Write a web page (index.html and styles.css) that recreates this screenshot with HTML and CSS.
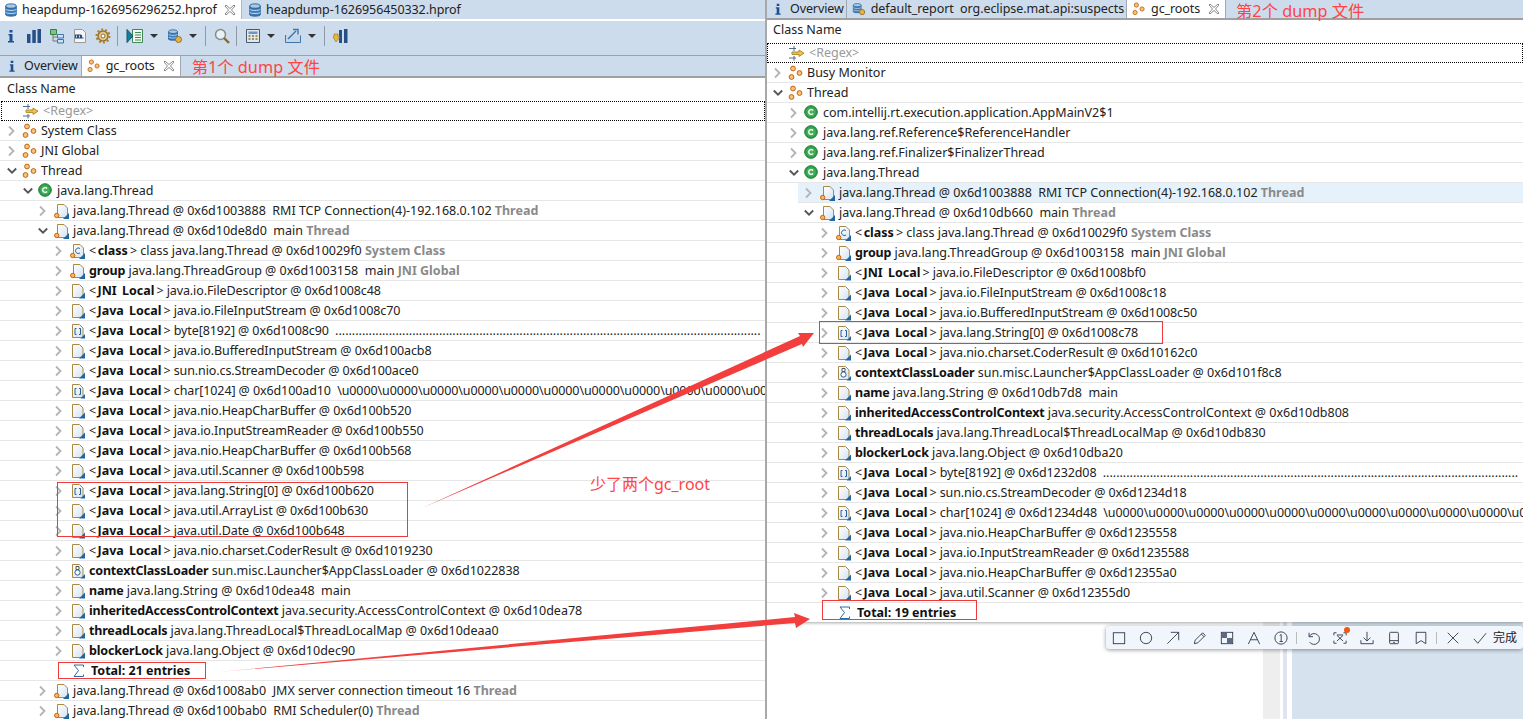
FILE: index.html
```html
<!DOCTYPE html>
<html lang="en">
<head>
<meta charset="utf-8">
<title>Memory Analyzer</title>
<link rel="stylesheet" href="styles.css">
</head>
<body>
<svg class="defs" width="0" height="0" aria-hidden="true">
  <defs>
    <linearGradient id="paper" x1="0" y1="0" x2="1" y2="1"><stop offset="0" stop-color="#fff"/><stop offset="1" stop-color="#d5e3f2"/></linearGradient>
    <symbol id="cr" viewBox="0 0 10 16"><path d="M2 3.500 6.500 8 2 12.500" fill="none" stroke="#b4b4b4" stroke-width="1.800"/></symbol>
    <symbol id="cd" viewBox="0 0 10 16"><path d="M.8 5.500 5 9.700 9.200 5.500" fill="none" stroke="#555" stroke-width="1.800"/></symbol>
    <symbol id="grp" viewBox="0 0 16 16"><g fill="#f6c27c" stroke="#c2650f"><circle cx="5" cy="3.500" r="2.400"/><circle cx="11.500" cy="8" r="2.400"/><circle cx="3.500" cy="12" r="2.400"/></g></symbol>
    <symbol id="cls" viewBox="0 0 16 16"><circle cx="7" cy="7" r="6.300" fill="#2f9d46" stroke="#1d7f35"/><circle cx="7" cy="7" r="4.500" fill="#43b15a"/><path d="M9 5.500a2.400 2.400 0 1 0 0 3" fill="none" stroke="#fff" stroke-width="1.400"/></symbol>
    <symbol id="doc" viewBox="0 0 16 16"><path d="M2.500 1.500h7l3.500 3.500v9.500h-10.500z" fill="url(#paper)" stroke="#a98a45"/><path d="M15 9.500v6h-6z" fill="#22659f"/></symbol>
    <symbol id="obj" viewBox="1 0 16 16"><path d="M4.500 1.500h6.500l3.500 3.500v9.500h-10z" fill="url(#paper)" stroke="#a98a45"/><path d="M16 10v6h-6z" fill="#22659f"/><circle cx="3.700" cy="12.500" r="2.200" fill="#f6b565" stroke="#c2650f"/></symbol>
    <symbol id="kls" viewBox="1 0 16 16"><path d="M4.500 1.500h6.500l3.500 3.500v9.500h-10z" fill="url(#paper)" stroke="#a98a45"/><path d="M16 10v6h-6z" fill="#22659f"/><path d="M11 5.500a2.800 2.800 0 1 0 0 4.500" fill="none" stroke="#2a6aa5"/><circle cx="3.700" cy="12.500" r="2.200" fill="#f6b565" stroke="#c2650f"/></symbol>
    <symbol id="arr" viewBox="0 0 16 16"><path d="M2.500 1.500h7l3.500 3.500v9.500h-10.500z" fill="url(#paper)" stroke="#a98a45"/><path d="M6.500 5.500h-1.500v6h1.500M9 5.500h1.500v6h-1.500" fill="none" stroke="#2a5f95"/><path d="M15 11v4.500h-4.500z" fill="#22659f"/></symbol>
    <symbol id="ldr" viewBox="0 0 16 16"><path d="M2.500 1.500h7l3.500 3.500v9.500h-10.500z" fill="url(#paper)" stroke="#a98a45"/><circle cx="7.500" cy="9.500" r="2.600" fill="#fff" stroke="#2a5f95"/><path d="M6 3.500h3v3h-3z" fill="#fff" stroke="#555"/><path d="M15 11v4.500h-4.500z" fill="#22659f"/></symbol>
    <symbol id="sum" viewBox="0 0 11 14"><path d="M10.500 3V1H1l4.500 5.500L1 12.500h9.500v-2" fill="none" stroke="#2b6aa5"/></symbol>
    <symbol id="db" viewBox="0 0 16 16"><path d="M2 3.500v10c0 2 12 2 12 0v-10" fill="#3f7cb8" stroke="#1f5a95"/><ellipse cx="8" cy="3.500" rx="6" ry="2.500" fill="#a9c9e6" stroke="#1f5a95"/><path d="M2 7c0 2 12 2 12 0M2 10.500c0 2 12 2 12 0" fill="none" stroke="#cfe1f2"/></symbol>
    <symbol id="closex" viewBox="0 0 12 12"><path d="M2 1 6 4.500 10 1l1 1-3.500 4 3.500 4-1 1-4-3.500L2 11l-1-1 3.500-4L1 2z" fill="#fff" stroke="#8a8a8a"/></symbol>
    <symbol id="info" viewBox="0 0 16 16"><path d="M6.500 2h3v2.500h-3zM5.500 6h4v7h1.500v1.500h-6v-1.500h1.500v-5.500h-1z" fill="#1e4f8f"/></symbol>
    <symbol id="bars" viewBox="0 0 16 16"><path d="M1 6h3.500v9h-3.500zM6.300 2h3.500v13h-3.500zM11.500 1h3.500v14h-3.500z" fill="#264f87"/></symbol>
    <symbol id="tree" viewBox="0 0 16 16"><path d="M4 7v6h4M4 9h4" fill="none" stroke="#777"/><path d="M1.500 1.500h6v5h-6z" fill="#7cc28b" stroke="#33803f"/><path d="M8.500 6.500h6v3.500h-6zM8.500 11.500h6v3.500h-6z" fill="#cfe2f5" stroke="#3d75ad"/></symbol>
    <symbol id="oql" viewBox="0 0 16 16"><path d="M2.500 1.500h8l3 3v10h-11z" fill="#f4f4f4" stroke="#9a9a9a"/><path d="M3.500 7h2v3h-2zM6.500 7h2v3h-2zM9.500 7v3h2" fill="none" stroke="#274d7d" stroke-width="1.100"/></symbol>
    <symbol id="gear" viewBox="0 0 16 16"><circle cx="8" cy="8" r="5" fill="#e6c98c" stroke="#93702f" stroke-width="1.500"/><circle cx="8" cy="8" r="6.500" fill="none" stroke="#a7813a" stroke-width="2" stroke-dasharray="2 2"/><circle cx="8" cy="8" r="2" fill="#fff" stroke="#93702f"/></symbol>
    <symbol id="run" viewBox="0 0 18 16"><path d="M6.500 1.500h10v13h-10z" fill="#f3f8f3" stroke="#3e8b52"/><path d="M9 4.500h6M9 7h6M9 9.500h6M9 12h6" stroke="#3e8b52"/><path d="M1 1.500 7 8l-6 6.500z" fill="#1d7b9a" stroke="#0f5a78"/></symbol>
    <symbol id="dbg" viewBox="0 0 16 16"><use href="#db" width="12" height="14"/><circle cx="11.500" cy="11.500" r="3" fill="#e6b53e" stroke="#93702f"/></symbol>
    <symbol id="find" viewBox="0 0 16 16"><circle cx="6.500" cy="6.500" r="5" fill="#e8f1f8" stroke="#8a8a8a" stroke-width="1.500"/><path d="M10 10 15 15" stroke="#8a6a2d" stroke-width="2.400"/></symbol>
    <symbol id="calc" viewBox="0 0 16 16"><path d="M1.500 1.500h13v13h-13z" fill="#dfe8ef" stroke="#46586a"/><path d="M3.500 3.500h9v2.500h-9z" fill="#6d96c2"/><path d="M3.500 8h2M7 8h2M10.500 8h2M3.500 11h2M7 11h2M10.500 11h2" stroke="#8a7130" stroke-width="1.500"/></symbol>
    <symbol id="exp" viewBox="0 0 18 16"><path d="M1.500 7v7.500h15v-7" fill="#c3d6ea" stroke="#3f74ac"/><path d="M4 11 12 3" stroke="#3f74ac" stroke-width="1.400"/><path d="M9 1.500h5v5" fill="none" stroke="#3f74ac" stroke-width="1.400"/></symbol>
    <symbol id="cmp" viewBox="0 0 16 16"><path d="M6 2h3v13h-3zM11 1h3.500v14h-3.500z" fill="#264f87"/><path d="M1 6h4v3h2l-4 5-3-5h1z" fill="#e8b83c" stroke="#a07c1c" stroke-width=".7"/></symbol>
    <symbol id="rx" viewBox="0 0 16 16"><path d="M0 3.500h7M0 13h7" stroke="#4e6f94"/><path d="M5 1v5M5 11v4.500" stroke="#4e6f94"/><path d="M3 7h7v-2l5 3.200-5 3.200v-2h-7z" fill="#ecc35c" stroke="#b58a22"/></symbol>
  </defs>
</svg>

<main class="app">
  <section class="pane pane-left">
    <nav class="filetabs">
      <div class="filetab active"><svg class="tabicon"><use href="#db"/></svg><span>heapdump-1626956296252.hprof</span><svg class="tabclose"><use href="#closex"/></svg></div>
      <div class="filetab"><svg class="tabicon"><use href="#db"/></svg><span>heapdump-1626956450332.hprof</span></div>
    </nav>
    <div class="toolbar">
      <svg class="tool"><use href="#info"/></svg>
      <svg class="tool"><use href="#bars"/></svg>
      <svg class="tool"><use href="#tree"/></svg>
      <svg class="tool"><use href="#oql"/></svg>
      <svg class="tool"><use href="#gear"/></svg>
      <i class="sep"></i>
      <svg class="tool wide"><use href="#run"/></svg><i class="drop"></i>
      <svg class="tool"><use href="#dbg"/></svg><i class="drop"></i>
      <i class="sep"></i>
      <svg class="tool"><use href="#find"/></svg>
      <i class="sep"></i>
      <svg class="tool"><use href="#calc"/></svg><i class="drop"></i>
      <svg class="tool wide"><use href="#exp"/></svg><i class="drop"></i>
      <i class="sep"></i>
      <svg class="tool"><use href="#cmp"/></svg>
    </div>
    <nav class="viewtabs">
      <div class="viewtab"><svg class="tabicon"><use href="#info"/></svg><span>Overview</span></div>
      <div class="viewtab active"><svg class="tabicon"><use href="#grp"/></svg><span>gc_roots</span><svg class="tabclose"><use href="#closex"/></svg></div>
      <span class="note">第1个 dump 文件</span>
    </nav>
    <div class="colhead">Class Name</div>
    <div class="tree">
      <div class="regex"><svg class="ic"><use href="#rx"/></svg><span>&lt;Regex&gt;</span></div>
      <div class="row l0"><svg class="ch"><use href="#cr"/></svg><svg class="ic"><use href="#grp"/></svg><span class="t">System Class</span></div>
      <div class="row l0"><svg class="ch"><use href="#cr"/></svg><svg class="ic"><use href="#grp"/></svg><span class="t">JNI Global</span></div>
      <div class="row l0"><svg class="ch"><use href="#cd"/></svg><svg class="ic"><use href="#grp"/></svg><span class="t">Thread</span></div>
      <div class="row l1"><svg class="ch"><use href="#cd"/></svg><svg class="ic"><use href="#cls"/></svg><span class="t">java.lang.Thread</span></div>
      <div class="row l2"><svg class="ch"><use href="#cr"/></svg><svg class="ic"><use href="#obj"/></svg><span class="t">java.lang.Thread @ 0x6d1003888  RMI TCP Connection(4)-192.168.0.102 <b class="g">Thread</b></span></div>
      <div class="row l2"><svg class="ch"><use href="#cd"/></svg><svg class="ic"><use href="#obj"/></svg><span class="t">java.lang.Thread @ 0x6d10de8d0  main <b class="g">Thread</b></span></div>
      <div class="row l3"><svg class="ch"><use href="#cr"/></svg><svg class="ic"><use href="#kls"/></svg><span class="t">&lt;<b class="c">class</b>&gt; class java.lang.Thread @ 0x6d10029f0 <b class="g">System Class</b></span></div>
      <div class="row l3"><svg class="ch"><use href="#cr"/></svg><svg class="ic"><use href="#obj"/></svg><span class="t"><b>group</b> java.lang.ThreadGroup @ 0x6d1003158  main <b class="g">JNI Global</b></span></div>
      <div class="row l3"><svg class="ch"><use href="#cr"/></svg><svg class="ic"><use href="#doc"/></svg><span class="t">&lt;<b class="k">JNI Local</b>&gt; java.io.FileDescriptor @ 0x6d1008c48</span></div>
      <div class="row l3"><svg class="ch"><use href="#cr"/></svg><svg class="ic"><use href="#doc"/></svg><span class="t">&lt;<b class="k">Java Local</b>&gt; java.io.FileInputStream @ 0x6d1008c70</span></div>
      <div class="row l3"><svg class="ch"><use href="#cr"/></svg><svg class="ic"><use href="#arr"/></svg><span class="t">&lt;<b class="k">Java Local</b>&gt; byte[8192] @ 0x6d1008c90  <span class="zeros">...............................................................................................................................</span></span></div>
      <div class="row l3"><svg class="ch"><use href="#cr"/></svg><svg class="ic"><use href="#doc"/></svg><span class="t">&lt;<b class="k">Java Local</b>&gt; java.io.BufferedInputStream @ 0x6d100acb8</span></div>
      <div class="row l3"><svg class="ch"><use href="#cr"/></svg><svg class="ic"><use href="#doc"/></svg><span class="t">&lt;<b class="k">Java Local</b>&gt; sun.nio.cs.StreamDecoder @ 0x6d100ace0</span></div>
      <div class="row l3"><svg class="ch"><use href="#cr"/></svg><svg class="ic"><use href="#arr"/></svg><span class="t">&lt;<b class="k">Java Local</b>&gt; char[1024] @ 0x6d100ad10  \u0000\u0000\u0000\u0000\u0000\u0000\u0000\u0000\u0000\u0000\u00</span></div>
      <div class="row l3"><svg class="ch"><use href="#cr"/></svg><svg class="ic"><use href="#doc"/></svg><span class="t">&lt;<b class="k">Java Local</b>&gt; java.nio.HeapCharBuffer @ 0x6d100b520</span></div>
      <div class="row l3"><svg class="ch"><use href="#cr"/></svg><svg class="ic"><use href="#doc"/></svg><span class="t">&lt;<b class="k">Java Local</b>&gt; java.io.InputStreamReader @ 0x6d100b550</span></div>
      <div class="row l3"><svg class="ch"><use href="#cr"/></svg><svg class="ic"><use href="#doc"/></svg><span class="t">&lt;<b class="k">Java Local</b>&gt; java.nio.HeapCharBuffer @ 0x6d100b568</span></div>
      <div class="row l3"><svg class="ch"><use href="#cr"/></svg><svg class="ic"><use href="#doc"/></svg><span class="t">&lt;<b class="k">Java Local</b>&gt; java.util.Scanner @ 0x6d100b598</span></div>
      <div class="row l3"><svg class="ch"><use href="#cr"/></svg><svg class="ic"><use href="#arr"/></svg><span class="t">&lt;<b class="k">Java Local</b>&gt; java.lang.String[0] @ 0x6d100b620</span></div>
      <div class="row l3"><svg class="ch"><use href="#cr"/></svg><svg class="ic"><use href="#doc"/></svg><span class="t">&lt;<b class="k">Java Local</b>&gt; java.util.ArrayList @ 0x6d100b630</span></div>
      <div class="row l3"><svg class="ch"><use href="#cr"/></svg><svg class="ic"><use href="#doc"/></svg><span class="t">&lt;<b class="k">Java Local</b>&gt; java.util.Date @ 0x6d100b648</span></div>
      <div class="row l3"><svg class="ch"><use href="#cr"/></svg><svg class="ic"><use href="#doc"/></svg><span class="t">&lt;<b class="k">Java Local</b>&gt; java.nio.charset.CoderResult @ 0x6d1019230</span></div>
      <div class="row l3"><svg class="ch"><use href="#cr"/></svg><svg class="ic"><use href="#ldr"/></svg><span class="t"><b>contextClassLoader</b> sun.misc.Launcher$AppClassLoader @ 0x6d1022838</span></div>
      <div class="row l3"><svg class="ch"><use href="#cr"/></svg><svg class="ic"><use href="#doc"/></svg><span class="t"><b>name</b> java.lang.String @ 0x6d10dea48  main</span></div>
      <div class="row l3"><svg class="ch"><use href="#cr"/></svg><svg class="ic"><use href="#doc"/></svg><span class="t"><b>inheritedAccessControlContext</b> java.security.AccessControlContext @ 0x6d10dea78</span></div>
      <div class="row l3"><svg class="ch"><use href="#cr"/></svg><svg class="ic"><use href="#doc"/></svg><span class="t"><b>threadLocals</b> java.lang.ThreadLocal$ThreadLocalMap @ 0x6d10deaa0</span></div>
      <div class="row l3"><svg class="ch"><use href="#cr"/></svg><svg class="ic"><use href="#doc"/></svg><span class="t"><b>blockerLock</b> java.lang.Object @ 0x6d10dec90</span></div>
      <div class="row total"><svg class="sigma"><use href="#sum"/></svg><b class="t">Total: 21 entries</b></div>
      <div class="row l2"><svg class="ch"><use href="#cr"/></svg><svg class="ic"><use href="#obj"/></svg><span class="t">java.lang.Thread @ 0x6d1008ab0  JMX server connection timeout 16 <b class="g">Thread</b></span></div>
      <div class="row l2"><svg class="ch"><use href="#cr"/></svg><svg class="ic"><use href="#obj"/></svg><span class="t">java.lang.Thread @ 0x6d100bab0  RMI Scheduler(0) <b class="g">Thread</b></span></div>
    </div>
  </section>

  <section class="pane pane-right">
    <div class="right-top">
      <nav class="viewtabs top">
        <div class="viewtab"><svg class="tabicon"><use href="#info"/></svg><span>Overview</span></div>
        <div class="viewtab"><svg class="tabicon"><use href="#dbg"/></svg><span class="long">default_report  org.eclipse.mat.api:suspects</span></div>
        <div class="viewtab active"><svg class="tabicon"><use href="#grp"/></svg><span>gc_roots</span><svg class="tabclose"><use href="#closex"/></svg></div>
        <span class="note">第2个 dump 文件</span>
      </nav>
      <div class="colhead">Class Name</div>
      <div class="tree">
        <div class="regex"><svg class="ic"><use href="#rx"/></svg><span>&lt;Regex&gt;</span></div>
        <div class="row l0"><svg class="ch"><use href="#cr"/></svg><svg class="ic"><use href="#grp"/></svg><span class="t">Busy Monitor</span></div>
        <div class="row l0"><svg class="ch"><use href="#cd"/></svg><svg class="ic"><use href="#grp"/></svg><span class="t">Thread</span></div>
        <div class="row l1"><svg class="ch"><use href="#cr"/></svg><svg class="ic"><use href="#cls"/></svg><span class="t">com.intellij.rt.execution.application.AppMainV2$1</span></div>
        <div class="row l1"><svg class="ch"><use href="#cr"/></svg><svg class="ic"><use href="#cls"/></svg><span class="t">java.lang.ref.Reference$ReferenceHandler</span></div>
        <div class="row l1"><svg class="ch"><use href="#cr"/></svg><svg class="ic"><use href="#cls"/></svg><span class="t">java.lang.ref.Finalizer$FinalizerThread</span></div>
        <div class="row l1"><svg class="ch"><use href="#cd"/></svg><svg class="ic"><use href="#cls"/></svg><span class="t">java.lang.Thread</span></div>
        <div class="row l2 hover"><svg class="ch"><use href="#cr"/></svg><svg class="ic"><use href="#obj"/></svg><span class="t">java.lang.Thread @ 0x6d1003888  RMI TCP Connection(4)-192.168.0.102 <b class="g">Thread</b></span></div>
        <div class="row l2"><svg class="ch"><use href="#cd"/></svg><svg class="ic"><use href="#obj"/></svg><span class="t">java.lang.Thread @ 0x6d10db660  main <b class="g">Thread</b></span></div>
        <div class="row l3"><svg class="ch"><use href="#cr"/></svg><svg class="ic"><use href="#kls"/></svg><span class="t">&lt;<b class="c">class</b>&gt; class java.lang.Thread @ 0x6d10029f0 <b class="g">System Class</b></span></div>
        <div class="row l3"><svg class="ch"><use href="#cr"/></svg><svg class="ic"><use href="#obj"/></svg><span class="t"><b>group</b> java.lang.ThreadGroup @ 0x6d1003158  main <b class="g">JNI Global</b></span></div>
        <div class="row l3"><svg class="ch"><use href="#cr"/></svg><svg class="ic"><use href="#doc"/></svg><span class="t">&lt;<b class="k">JNI Local</b>&gt; java.io.FileDescriptor @ 0x6d1008bf0</span></div>
        <div class="row l3"><svg class="ch"><use href="#cr"/></svg><svg class="ic"><use href="#doc"/></svg><span class="t">&lt;<b class="k">Java Local</b>&gt; java.io.FileInputStream @ 0x6d1008c18</span></div>
        <div class="row l3"><svg class="ch"><use href="#cr"/></svg><svg class="ic"><use href="#doc"/></svg><span class="t">&lt;<b class="k">Java Local</b>&gt; java.io.BufferedInputStream @ 0x6d1008c50</span></div>
        <div class="row l3"><svg class="ch"><use href="#cr"/></svg><svg class="ic"><use href="#arr"/></svg><span class="t">&lt;<b class="k">Java Local</b>&gt; java.lang.String[0] @ 0x6d1008c78</span></div>
        <div class="row l3"><svg class="ch"><use href="#cr"/></svg><svg class="ic"><use href="#doc"/></svg><span class="t">&lt;<b class="k">Java Local</b>&gt; java.nio.charset.CoderResult @ 0x6d10162c0</span></div>
        <div class="row l3"><svg class="ch"><use href="#cr"/></svg><svg class="ic"><use href="#ldr"/></svg><span class="t"><b>contextClassLoader</b> sun.misc.Launcher$AppClassLoader @ 0x6d101f8c8</span></div>
        <div class="row l3"><svg class="ch"><use href="#cr"/></svg><svg class="ic"><use href="#doc"/></svg><span class="t"><b>name</b> java.lang.String @ 0x6d10db7d8  main</span></div>
        <div class="row l3"><svg class="ch"><use href="#cr"/></svg><svg class="ic"><use href="#doc"/></svg><span class="t"><b>inheritedAccessControlContext</b> java.security.AccessControlContext @ 0x6d10db808</span></div>
        <div class="row l3"><svg class="ch"><use href="#cr"/></svg><svg class="ic"><use href="#doc"/></svg><span class="t"><b>threadLocals</b> java.lang.ThreadLocal$ThreadLocalMap @ 0x6d10db830</span></div>
        <div class="row l3"><svg class="ch"><use href="#cr"/></svg><svg class="ic"><use href="#doc"/></svg><span class="t"><b>blockerLock</b> java.lang.Object @ 0x6d10dba20</span></div>
        <div class="row l3"><svg class="ch"><use href="#cr"/></svg><svg class="ic"><use href="#arr"/></svg><span class="t">&lt;<b class="k">Java Local</b>&gt; byte[8192] @ 0x6d1232d08  <span class="zeros">............................................................................................................................</span></span></div>
        <div class="row l3"><svg class="ch"><use href="#cr"/></svg><svg class="ic"><use href="#doc"/></svg><span class="t">&lt;<b class="k">Java Local</b>&gt; sun.nio.cs.StreamDecoder @ 0x6d1234d18</span></div>
        <div class="row l3"><svg class="ch"><use href="#cr"/></svg><svg class="ic"><use href="#arr"/></svg><span class="t">&lt;<b class="k">Java Local</b>&gt; char[1024] @ 0x6d1234d48  \u0000\u0000\u0000\u0000\u0000\u0000\u0000\u0000\u0000\u0000\u00</span></div>
        <div class="row l3"><svg class="ch"><use href="#cr"/></svg><svg class="ic"><use href="#doc"/></svg><span class="t">&lt;<b class="k">Java Local</b>&gt; java.nio.HeapCharBuffer @ 0x6d1235558</span></div>
        <div class="row l3"><svg class="ch"><use href="#cr"/></svg><svg class="ic"><use href="#doc"/></svg><span class="t">&lt;<b class="k">Java Local</b>&gt; java.io.InputStreamReader @ 0x6d1235588</span></div>
        <div class="row l3"><svg class="ch"><use href="#cr"/></svg><svg class="ic"><use href="#doc"/></svg><span class="t">&lt;<b class="k">Java Local</b>&gt; java.nio.HeapCharBuffer @ 0x6d12355a0</span></div>
        <div class="row l3"><svg class="ch"><use href="#cr"/></svg><svg class="ic"><use href="#doc"/></svg><span class="t">&lt;<b class="k">Java Local</b>&gt; java.util.Scanner @ 0x6d12355d0</span></div>
        <div class="row total last"><svg class="sigma"><use href="#sum"/></svg><b class="t">Total: 19 entries</b></div>
      </div>
    </div>
    <div class="desk">
      <div class="desk-white"></div>
      <div class="desk-gray"></div>
      <div class="desk-gap"></div>
      <div class="desk-lav"></div>
      <div class="desk-gap2"></div>
      <div class="desk-blue"></div>
    </div>
  </section>
</main>

<div class="shotbar">
  <svg class="st" viewBox="0 0 16 16"><rect x="1.500" y="2" width="13" height="12.500"/></svg>
  <svg class="st" viewBox="0 0 16 16"><circle cx="8" cy="8" r="6.500"/></svg>
  <svg class="st" viewBox="0 0 16 16"><path d="M1.500 14.500 14.500 1.500M5.500 1.500h9v9"/></svg>
  <svg class="st" viewBox="0 0 16 16"><path d="M1.500 14.500l1-4L11 2l3 3-8.500 8.500zM9.500 3.500l3 3"/></svg>
  <svg class="st" viewBox="0 0 16 16"><rect x="1.500" y="1.500" width="13" height="13"/><path class="fill" d="M2 2h6v6h-6zM8 8h6v6h-6z"/></svg>
  <svg class="st" viewBox="0 0 16 16"><path d="M1.500 15 8 1.500 14.500 15M4 10h8"/></svg>
  <svg class="st" viewBox="0 0 16 16"><circle cx="8" cy="8" r="7"/><path d="M6.500 5 8.200 4v8M6.300 12h3.800"/></svg>
  <i class="st-sep"></i>
  <svg class="st" viewBox="0 0 16 16"><path d="M3.500 2v4.500h4.500M3.700 6.300a6.200 6.200 0 1 1 .3 6.200"/></svg>
  <span class="st-dot"><svg class="st" viewBox="0 0 16 16"><path d="M1 5v-3h3M12 2h3v3M15 11v3h-3M4 14h-3v-3M4.500 5l7 6.500M11.500 5l-7 6.500M4.500 4.500h7"/></svg><i class="dot"></i></span>
  <svg class="st" viewBox="0 0 16 16"><path d="M8 1v10M4 7.500 8 11.500l4-4M1 10.500v4h14v-4"/></svg>
  <svg class="st" viewBox="0 0 16 16"><rect x="3" y="1.500" width="10" height="13" rx="1"/><path d="M3 11h10M7 13h2"/></svg>
  <svg class="st" viewBox="0 0 16 16"><path d="M2.500 1.500h11v13l-5.500-3.500-5.500 3.500z"/></svg>
  <i class="st-sep"></i>
  <svg class="st" viewBox="0 0 16 16"><path d="M2 2 14 14M14 2 2 14"/></svg>
  <svg class="st" viewBox="0 0 16 16"><path d="M1 9l4.500 5L15 2.500"/></svg>
  <span class="st-label">完成</span>
</div>

<svg class="arrows" width="1523" height="719" viewBox="0 0 1523 719" aria-hidden="true">
  <path d="M422 508 800 336 798 333 814 333 803 347 802 344z"/>
  <path d="M218 672 795 617 794 613 810 619 796 628 795 623z"/>
</svg>
<div class="box box-a"></div>
<div class="box box-b"></div>
<div class="box box-c"></div>
<div class="box box-d"></div>
<div class="remark">少了两个gc_root</div>
</body>
</html>
```
FILE: styles.css
```css
* { box-sizing: border-box; }
html, body { margin: 0; height: 719px; overflow: hidden; background: #fff; }
body { font: 12.5px/20px "Noto Sans", "Noto Sans CJK SC", sans-serif; color: #222; position: relative; }
.defs { position: absolute; }
.app { display: flex; height: 719px; }
.pane { height: 719px; overflow: hidden; }
.pane-left { width: 765px; flex: none; }
.pane-right { flex: 1; min-width: 0; display: flex; flex-direction: column; border-left: 2px solid #a8a8a8; }
.right-top { height: 622px; flex: none; box-shadow: 0 1px 3px rgba(0,0,0,.35); position: relative; }

.filetabs { display: flex; height: 21px; background: #cddcec; border-bottom: 2px solid #fff; }
.filetab { display: flex; align-items: center; height: 19px; padding: 1px 0 0 4px; letter-spacing: -.07px; }
.filetab span { margin-left: 4px; }
.filetab.active { width: 241px; background: #fff; }
.filetab:not(.active) { padding-left: 6px; border-left: 1px solid #a8b8c8; }
.tabicon { width: 14px; height: 16px; flex: none; }
.tabclose { width: 12px; height: 12px; margin-left: 7px; flex: none; }

.toolbar { display: flex; align-items: center; height: 35px; padding: 0 0 5px 3px; gap: 7px; background: #cddcec; border-bottom: 1px solid #a0a0a0; }
.tool { width: 16px; height: 16px; flex: none; }
.tool.wide { width: 18px; height: 16px; }
.sep { width: 1px; height: 20px; background: #8f9aa5; flex: none; margin: 0 1px 0 -1px; }
.drop { width: 0; height: 0; margin-left: -1px; margin-right: 2px; border: 4px solid transparent; border-top: 4px solid #333; border-bottom: 0; flex: none; }

.viewtabs { display: flex; align-items: center; height: 22px; background: #cddcec; border-bottom: 2px solid #a0a0a0; }
.viewtabs.top { height: 20px; }
.viewtab { display: flex; align-items: center; gap: 5px; height: 20px; padding: 0 3px 0 5px; border-right: 1px solid #a0a8b2; letter-spacing: -.1px; }
.viewtabs.top .viewtab { height: 18px; padding-right: 2px; }
.viewtabs.top .viewtab:first-child { margin-left: -1px; }
.viewtabs.top .viewtab.active { padding-right: 5px; }
.viewtab.active { background: #fff; padding-right: 5px; }
.viewtab .tabclose { margin-left: 3px; }
.long { white-space: pre; letter-spacing: -.07px; }
.note { margin: 2px 0 0 11px; font-size: 16.3px; color: #f44; white-space: pre; }
.viewtabs.top .note { margin: 4px 0 0 10px; }

.colhead { height: 23px; padding: 1px 7px 0; background: #fff; }
.pane-right .colhead { padding: 0 6px; }
.tree { display: flex; flex-direction: column; }
.pane-right .tree { margin-left: -1px; }
.regex { display: flex; align-items: center; height: 20px; flex: none; margin-left: 1px; padding-left: 21px; color: #999; border: 1px dotted #000; }
.regex .ic { margin-right: 4px; }
.row { display: flex; align-items: center; height: 20px; flex: none; border-bottom: 1px solid #e6e6e6; white-space: pre; overflow: hidden; }
.row.hover { background: #e5f1fb; margin-left: 32px; padding-left: 6px; }
.row.last { border-bottom: 0; }
.l0 { padding-left: 7px; }
.l1 { padding-left: 23px; }
.l2 { padding-left: 38px; }
.l3 { padding-left: 54px; }
.ch { width: 10px; height: 16px; flex: none; margin-right: 5px; }
.l2 .ch, .l3 .ch { margin-right: 6px; }
.ic { width: 16px; height: 16px; flex: none; margin-right: 3px; }
.t { white-space: pre; }
.t:has(.k) { letter-spacing: -.1px; }
.t b { font-weight: 700; color: #111; letter-spacing: -.18px; }
.t b.k, .t b.c { margin: 0 2px 0 1.5px; letter-spacing: 0; word-spacing: 2px; }
.t b.g { color: #8a8a8a; letter-spacing: 0; }
.zeros { letter-spacing: 0; }
.total { padding-left: 73px; }
.total .t { margin-left: 7px; color: #111; }
.sigma { width: 11px; height: 14px; flex: none; }

.desk { flex: 1; display: flex; }
.desk-white { width: 496px; background: #fff; }
.desk-gray { width: 17px; background: #eeeeee; }
.desk-gap { width: 3px; background: #fff; }
.desk-lav { width: 4px; background: #dfe4f3; }
.desk-gap2 { width: 5px; background: #fff; }
.desk-blue { flex: 1; background: #d6e3ef; }

.shotbar { position: absolute; left: 1106px; top: 626px; width: 417px; height: 23px; display: flex; align-items: center; padding-left: 6px; background: #f1f5fc; border-radius: 3px; box-shadow: 0 1px 4px rgba(0,0,0,.4); }
.st { width: 14px; height: 14px; flex: none; margin-right: 13px; fill: none; stroke: #2c3545; stroke-width: 1; }
.st .fill { fill: #5e6a80; stroke: none; }
.st-sep { width: 1px; height: 12px; background: #bbb; margin: 0 9px 0 -5px; flex: none; }
.st-dot { position: relative; display: flex; }
.dot { position: absolute; left: 11px; top: -4px; width: 6px; height: 6px; border-radius: 50%; background: #ee5a10; }
.st-label { font-size: 12px; margin-left: -7px; color: #222; }

.arrows { position: absolute; left: 0; top: 0; pointer-events: none; fill: #f33e3e; }
.box { position: absolute; border: 1px solid #f03a3a; pointer-events: none; }
.box-a { left: 57px; top: 482px; width: 351px; height: 55px; }
.box-b { left: 58px; top: 662px; width: 148px; height: 17px; }
.box-c { left: 819px; top: 321px; width: 344px; height: 23px; }
.box-d { left: 822px; top: 600px; width: 155px; height: 20px; }
.remark { position: absolute; left: 590px; top: 474px; font-size: 16px; color: #f44; white-space: pre; }
```
